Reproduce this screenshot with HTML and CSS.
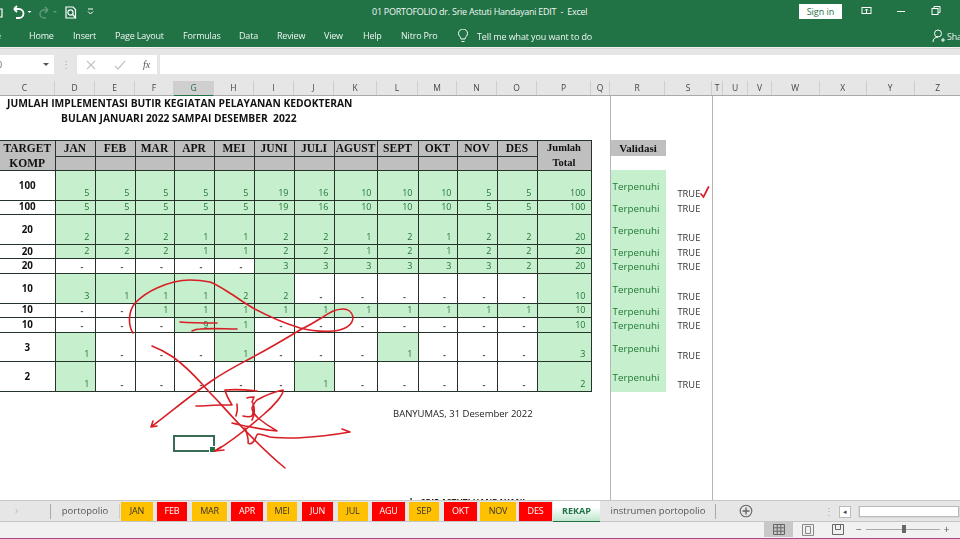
FILE: index.html
```html
<!DOCTYPE html>
<html lang="en">
<head>
<meta charset="utf-8">
<title>01 PORTOFOLIO dr. Srie Astuti Handayani EDIT - Excel</title>
<link rel="stylesheet" href="styles.css">
</head>
<body>
<div class="app">
  <header class="ribbon">
    <div class="titlebar">
      <div class="qat">
        <svg width="100" height="20" viewBox="0 0 100 20" fill="none" stroke="#fff" stroke-width="1.5">
          <path d="M0 6h2v8h-2" stroke-width="1.2"/>
          <path d="M14 6h5a4.500 4.500 0 0 1 0 9h-3M14 6l3-3M14 6l3 3" stroke-width="1.800"/>
          <path d="M27.500 8h4l-2 2z" fill="#fff" stroke="none"/>
          <path d="M48 7h-4a4 4 0 0 0 0 8h2M48 7l-3-3M48 7l-3 3" stroke="#5f9c7b"/>
          <path d="M53 8h4l-2 2z" fill="#5f9c7b" stroke="none"/>
          <path d="M66 4h7l2.500 2.500V15H66z" stroke-width="1.200"/>
          <circle cx="70.500" cy="9.500" r="2.600" stroke-width="1.100"/>
          <path d="M72.500 11.500l3.500 3.500" stroke-width="1.300"/>
          <path d="M88 6h5M88 8.500l2.500 2.500 2.500-2.500" stroke-width="1"/>
        </svg>
      </div>
      <div class="doc-title">01 PORTOFOLIO dr. Srie Astuti Handayani EDIT&nbsp; -&nbsp; Excel</div>
      <button class="signin">Sign in</button>
      <div class="win-icons">
        <svg width="12" height="10" viewBox="0 0 12 10" fill="none" stroke="#fff"><rect x="1" y="1.500" width="9" height="6"/><path d="M5.500 7V3M4 4.500l1.500-1.500 1.500 1.500"/></svg>
        <svg width="12" height="10" viewBox="0 0 12 10" fill="none" stroke="#fff"><path d="M1 5.500h8"/></svg>
        <svg width="12" height="10" viewBox="0 0 12 10" fill="none" stroke="#fff"><rect x="1" y="2.500" width="6" height="6"/><path d="M3 2.500V.5h6v6H7"/></svg>
      </div>
    </div>
    <nav class="menu">
      <span class="menu-edge">e</span>
      <span>Home</span><span>Insert</span><span>Page Layout</span><span>Formulas</span><span>Data</span><span>Review</span><span>View</span><span>Help</span><span>Nitro Pro</span>
      <span class="tell">
        <svg width="12" height="14" viewBox="0 0 12 14" fill="none" stroke="#fff"><path d="M4 10c0-2-2.500-3-2.500-5.500a4.500 4.500 0 0 1 9 0C10.500 7 8 8 8 10zM4.500 12.500h3"/></svg>
        Tell me what you want to do
      </span>
      <span class="share">
        <svg width="13" height="14" viewBox="0 0 13 14" fill="none" stroke="#fff"><circle cx="6" cy="4.500" r="3.500"/><path d="M1 13c0-3 2-5 5-5M9 11h4M11 9v4"/></svg>
        Sha
      </span>
    </nav>
  </header>

  <div class="formula-bar">
    <div class="name-box"><span>0</span><i class="caret"></i></div>
    <div class="dots">⋮</div>
    <div class="fx-box">
      <svg width="12" height="12" viewBox="0 0 12 12" fill="none" stroke="#c4c4c4" stroke-width="1.200"><path d="M2 2l8 8M10 2l-8 8"/></svg>
      <svg width="13" height="12" viewBox="0 0 13 12" fill="none" stroke="#c4c4c4" stroke-width="1.200"><path d="M2 7l3 3 7-8"/></svg>
      <em>fx</em>
    </div>
    <div class="formula-input"></div>
  </div>

  <div class="col-heads">
    <span class="w-c">C</span><span class="w-m">D</span><span class="w-m">E</span><span class="w-n">F</span><span class="w-m sel">G</span><span class="w-m">H</span><span class="w-m">I</span><span class="w-m">J</span><span class="w-k">K</span><span class="w-l">L</span><span class="w-n">M</span><span class="w-m">N</span><span class="w-m">O</span><span class="w-p">P</span><span class="w-q">Q</span><span class="w-r">R</span><span class="w-s">S</span><span class="w-t">T</span><span class="w-u">U</span><span class="w-v">V</span><span class="w-x">W</span><span class="w-x">X</span><span class="w-x">Y</span><span class="w-x">Z</span>
  </div>

  <main class="sheet">
    <h1 class="t1">JUMLAH IMPLEMENTASI BUTIR KEGIATAN PELAYANAN KEDOKTERAN</h1>
    <h2 class="t2">BULAN JANUARI 2022 SAMPAI DESEMBER&nbsp; 2022</h2>
    <div class="tables">
      <table class="rekap">
        <colgroup><col class="c-c"><col class="c-m"><col class="c-m"><col class="c-n"><col class="c-m"><col class="c-m"><col class="c-m"><col class="c-m"><col class="c-k"><col class="c-l"><col class="c-n"><col class="c-m"><col class="c-m"><col class="c-p"></colgroup>
        <thead>
          <tr class="h1r"><th rowspan="2">TARGET<br>KOMP</th><th>JAN</th><th>FEB</th><th>MAR</th><th>APR</th><th>MEI</th><th>JUNI</th><th>JULI</th><th>AGUST</th><th>SEPT</th><th>OKT</th><th>NOV</th><th>DES</th><th rowspan="2" class="tot">Jumlah<br>Total</th></tr>
          <tr class="h2r"><th></th><th></th><th></th><th></th><th></th><th></th><th></th><th></th><th></th><th></th><th></th><th></th></tr>
        </thead>
        <tbody>
          <tr class="tall"><th>100</th><td class="g">5</td><td class="g">5</td><td class="g">5</td><td class="g">5</td><td class="g">5</td><td class="g">19</td><td class="g">16</td><td class="g">10</td><td class="g">10</td><td class="g">10</td><td class="g">5</td><td class="g">5</td><td class="g">100</td></tr>
          <tr class="thin"><th>100</th><td class="g">5</td><td class="g">5</td><td class="g">5</td><td class="g">5</td><td class="g">5</td><td class="g">19</td><td class="g">16</td><td class="g">10</td><td class="g">10</td><td class="g">10</td><td class="g">5</td><td class="g">5</td><td class="g">100</td></tr>
          <tr class="tall"><th>20</th><td class="g">2</td><td class="g">2</td><td class="g">2</td><td class="g">1</td><td class="g">1</td><td class="g">2</td><td class="g">2</td><td class="g">1</td><td class="g">2</td><td class="g">1</td><td class="g">2</td><td class="g">2</td><td class="g">20</td></tr>
          <tr class="thin"><th>20</th><td class="g">2</td><td class="g">2</td><td class="g">2</td><td class="g">1</td><td class="g">1</td><td class="g">2</td><td class="g">2</td><td class="g">1</td><td class="g">2</td><td class="g">1</td><td class="g">2</td><td class="g">2</td><td class="g">20</td></tr>
          <tr class="thin"><th>20</th><td class="d">-</td><td class="d">-</td><td class="d">-</td><td class="d">-</td><td class="d">-</td><td class="g">3</td><td class="g">3</td><td class="g">3</td><td class="g">3</td><td class="g">3</td><td class="g">3</td><td class="g">2</td><td class="g">20</td></tr>
          <tr class="tall"><th>10</th><td class="g">3</td><td class="g">1</td><td class="g">1</td><td class="g">1</td><td class="g">2</td><td class="g">2</td><td class="d">-</td><td class="d">-</td><td class="d">-</td><td class="d">-</td><td class="d">-</td><td class="d">-</td><td class="g">10</td></tr>
          <tr class="thin"><th>10</th><td class="d">-</td><td class="d">-</td><td class="g">1</td><td class="g">1</td><td class="g">1</td><td class="g">1</td><td class="g">1</td><td class="g">1</td><td class="g">1</td><td class="g">1</td><td class="g">1</td><td class="g">1</td><td class="g">10</td></tr>
          <tr class="thin"><th>10</th><td class="d">-</td><td class="d">-</td><td class="d">-</td><td class="g">9</td><td class="g">1</td><td class="d">-</td><td class="d">-</td><td class="d">-</td><td class="d">-</td><td class="d">-</td><td class="d">-</td><td class="d">-</td><td class="g">10</td></tr>
          <tr class="tall"><th>3</th><td class="g">1</td><td class="d">-</td><td class="d">-</td><td class="d">-</td><td class="g">1</td><td class="d">-</td><td class="d">-</td><td class="d">-</td><td class="g">1</td><td class="d">-</td><td class="d">-</td><td class="d">-</td><td class="g">3</td></tr>
          <tr class="tall"><th>2</th><td class="g">1</td><td class="d">-</td><td class="d">-</td><td class="d">-</td><td class="d">-</td><td class="d">-</td><td class="g">1</td><td class="d">-</td><td class="d">-</td><td class="d">-</td><td class="d">-</td><td class="d">-</td><td class="g">2</td></tr>
        </tbody>
      </table>

      <div class="side">
        <div class="v-head"><span class="v-title">Validasi</span></div>
        <div class="v-row tall"><span class="v-ok">Terpenuhi</span><span class="v-true">TRUE</span></div>
        <div class="v-row thin"><span class="v-ok">Terpenuhi</span><span class="v-true">TRUE</span></div>
        <div class="v-row tall"><span class="v-ok">Terpenuhi</span><span class="v-true">TRUE</span></div>
        <div class="v-row thin"><span class="v-ok">Terpenuhi</span><span class="v-true">TRUE</span></div>
        <div class="v-row thin"><span class="v-ok">Terpenuhi</span><span class="v-true">TRUE</span></div>
        <div class="v-row tall"><span class="v-ok">Terpenuhi</span><span class="v-true">TRUE</span></div>
        <div class="v-row thin"><span class="v-ok">Terpenuhi</span><span class="v-true">TRUE</span></div>
        <div class="v-row thin"><span class="v-ok">Terpenuhi</span><span class="v-true">TRUE</span></div>
        <div class="v-row tall"><span class="v-ok">Terpenuhi</span><span class="v-true">TRUE</span></div>
        <div class="v-row tall"><span class="v-ok">Terpenuhi</span><span class="v-true">TRUE</span></div>
      </div>
    </div>
    <p class="place">BANYUMAS, 31 Desember 2022</p>
    <p class="signer">dr. SRIE ASTUTI HANDAYANI</p>

    <i class="freeze f1"></i>
    <i class="freeze f2"></i>
    <i class="active-cell"></i>
    <svg class="ink" width="960" height="404" viewBox="0 96 960 404" fill="none" stroke="#d81f26" stroke-width="1.600" stroke-linecap="round" stroke-linejoin="round">
      <path d="M133 333C128 325 128 312 135 303C142 296 148 292 157 288C168 283 180 280 190 280C198 280 205 281 210 282C220 286 226 291 233 295C240 300 246 304 253 308C268 316 284 323 300 328C312 331 322 332 333 331C345 330 353 325 353 317C352 312 348 309 343 309C335 309 329 313 323 317C315 322 308 326 300 330C285 339 268 349 253 357C240 364 226 371 213 380C192 394 171 412 151 427L153 421M151 427L157 426"/>
      <path d="M180 322C192 323 205 323 217 323"/>
      <path d="M192 331C196 329 198 329 200 329C212 328 225 329 237 329"/>
      <path d="M152 346C160 349 167 353 173 357C184 365 194 375 203 385C208 391 213 396 217 400C235 420 260 448 285 468"/>
      <path d="M196 406C205 406 214 405 222 405C226 405 229 405 232 405C229 400 226 395 225 390C236 389 248 390 257 391"/>
      <path d="M237 404C238 409 237 413 236 416"/>
      <path d="M247 398C249 397 252 397 254 397L252 402M243 416C247 417 250 417 252 416C254 412 254 407 253 403C255 410 255 415 252 420"/>
      <path d="M232 423C236 424 241 425 245 426C256 428 266 430 277 431C270 427 264 423 258 418C254 414 252 411 252 408C253 404 255 402 257 400C264 396 274 392 283 390C284 394 274 406 263 415C248 428 232 441 215 451"/>
      <path d="M215 451L221 447M215 451L224 450"/>
      <path d="M245 428C247 434 249 439 248 443C250 445 254 443 256 437C257 435 257 434 258 434C262 434 266 436 270 437C278 438 287 438 297 438C315 437 333 435 350 432L342 429"/>
    </svg>
    <svg class="check" width="12" height="14" viewBox="0 0 12 14" fill="none" stroke="#d81f26" stroke-width="1.700" stroke-linecap="round"><path d="M2 8l2.500 3 5-10"/></svg>
  </main>

  <footer class="bottom">
    <div class="tabs">
      <span class="nav-arrow">›</span>
      <span class="tab plain first">portopolio</span>
      <span class="tab y">JAN</span><span class="tab r">FEB</span><span class="tab y">MAR</span><span class="tab r">APR</span><span class="tab y">MEI</span><span class="tab r">JUN</span><span class="tab y">JUL</span><span class="tab r">AGU</span><span class="tab y">SEP</span><span class="tab r">OKT</span><span class="tab y">NOV</span><span class="tab r">DES</span>
      <span class="tab active">REKAP</span>
      <span class="tab plain last">instrumen portopolio</span>
      <svg class="add" width="14" height="14" viewBox="0 0 14 14" fill="none" stroke="#666" stroke-width="1.100"><circle cx="7" cy="7" r="5.800"/><path d="M3.500 7h7M7 3.500v7" stroke-width="1.400"/></svg>
      <span class="vdots">⋮</span>
      <span class="scroll-left">◂</span>
      <span class="scroll-track"><i></i></span>
    </div>
    <div class="status">
      <span class="view on"><svg width="12" height="11" viewBox="0 0 12 11" fill="none" stroke="#666"><path d="M.5.500h11v10H.5zM.5 3.800h11M.5 7.200h11M4.200.5v10M7.800.5v10"/></svg></span>
      <span class="view"><svg width="12" height="12" viewBox="0 0 12 12" fill="none" stroke="#888"><path d="M.5.500h11v11H.5zM3.500 2.500h5v7h-5z"/></svg></span>
      <span class="view"><svg width="12" height="11" viewBox="0 0 12 11" fill="none" stroke="#666"><path d="M.5.500h11v10H.5zM3.500.5v5h5v-5"/></svg></span>
      <div class="zoom"><b>−</b><span class="slider"><i></i></span><b>+</b></div>
    </div>
    <div class="taskline"></div>
  </footer>
</div>
</body>
</html>
```

FILE: styles.css
```css
* { box-sizing: border-box; }
html, body { margin: 0; padding: 0; }
body { width: 960px; height: 539px; overflow: hidden; background: #fff; font-family: "Open Sans", "Liberation Sans", sans-serif; }
.app { width: 960px; height: 539px; display: flex; flex-direction: column; overflow: hidden; filter: blur(.4px); }

/* ribbon */
.ribbon { height: 47px; background: #217346; color: #fff; flex: none; }
.titlebar { height: 24px; display: flex; align-items: center; position: relative; }
.qat { width: 100px; display: flex; height: 20px; margin-top: 2px; }
.doc-title { position: absolute; left: 372px; top: 5px; font-size: 9px; letter-spacing: -.26px; line-height: 13px; white-space: nowrap; color: #f1f6f3; }
.signin { position: absolute; left: 799px; top: 4px; width: 43px; height: 15px; border: 0; padding: 0; background: #fff; color: #217346; font: 9px/15px "Open Sans", sans-serif; }
.win-icons { position: absolute; left: 861px; top: 6px; display: flex; gap: 23px; }
.menu { height: 23px; display: flex; align-items: center; font-size: 9px; letter-spacing: -.2px; position: relative; color: #eef5f1; }
.menu > span { position: absolute; top: 5px; line-height: 13px; white-space: nowrap; }
.menu-edge { left: -4px; }
.menu > span:nth-child(2) { left: 29px; }
.menu > span:nth-child(3) { left: 73px; }
.menu > span:nth-child(4) { left: 115px; }
.menu > span:nth-child(5) { left: 183px; }
.menu > span:nth-child(6) { left: 239px; }
.menu > span:nth-child(7) { left: 277px; }
.menu > span:nth-child(8) { left: 324px; }
.menu > span:nth-child(9) { left: 363px; }
.menu > span:nth-child(10) { left: 401px; }
.menu > span.tell { left: 457px; display: flex; gap: 8px; align-items: center; letter-spacing: -.12px; }
.menu > span.share { left: 932px; display: flex; gap: 2px; align-items: center; }

/* formula bar */
.formula-bar { height: 34px; flex: none; background: #e6e6e6; border-top: 1px solid #f2f2f2; display: flex; padding: 7px 0 0; box-shadow: inset 0 1px 0 #d8d8d8; }
.name-box { width: 54px; height: 19px; background: #fff; display: flex; justify-content: space-between; align-items: center; padding: 0 5px 0 0; font-size: 9px; color: #666; }
.name-box span { margin-left: -3px; }
.caret { width: 0; height: 0; border: 3px solid transparent; border-top: 3px solid #555; border-bottom: 0; }
.dots { width: 23px; text-align: center; color: #aaa; font-size: 10px; line-height: 19px; }
.fx-box { width: 80px; height: 19px; background: #fff; display: flex; align-items: center; padding-left: 8px; gap: 16px; }
.fx-box em { font: italic 10px/19px "Liberation Serif", serif; color: #555; margin-left: 1px; }
.formula-input { margin-left: 3px; flex: 1; height: 19px; background: #fff; }

/* column headers */
.col-heads { height: 15px; flex: none; display: flex; background: #e6e6e6; border-bottom: 1px solid #a9a9a9; font-size: 8.500px; line-height: 14px; color: #444; }
.col-heads span { text-align: center; border-right: 1px solid #cfcfcf; flex: none; }
.col-heads .sel { background: #cfcfcf; border-bottom: 1px solid #217346; height: 15px; color: #217346; }
.col-heads .w-c { padding-right: 5px; }
.w-c { width: 55px; } .w-m { width: 40px; } .w-n { width: 39px; } .w-k { width: 43px; } .w-l { width: 41px; } .w-p { width: 54px; } .w-q { width: 19px; } .w-r { width: 55px; } .w-s { width: 47px; } .w-t { width: 11px; } .w-u { width: 25px; } .w-v { width: 24px; } .w-x { width: 47.500px; }

/* sheet */
.sheet { height: 404px; flex: none; position: relative; background: #fff; overflow: hidden; }
.t1, .t2 { margin: 0; font: bold 10.250px/15px "Open Sans", sans-serif; color: #111; white-space: nowrap; }
.t1 { padding: 0 0 0 7px; }
.t2 { padding-left: 61px; }
.tables { margin-top: 14px; display: flex; align-items: flex-start; }
.rekap { border-collapse: collapse; table-layout: fixed; width: 591px; flex: none; }
.c-c { width: 55px; } .c-m { width: 40px; } .c-n { width: 39px; } .c-k { width: 43px; } .c-l { width: 41px; } .c-p { width: 54px; }
.rekap th, .rekap td { border: 1px solid #26332b; padding: 0; }
.rekap tr > :first-child { border-left: 0; }
.rekap thead th { background: #bfbfbf; font: bold 11.500px/14.500px "Liberation Serif", serif; color: #111; text-align: center; }
.rekap thead .tot { font-size: 10.500px; }
.h1r { height: 16px; } .h2r { height: 14px; }
.rekap tr.tall { height: 29.500px; } .rekap tr.thin { height: 14.700px; }
.rekap tbody th { background: #fff; font: bold 9.800px/12px "Open Sans", sans-serif; color: #111; text-align: center; }
.rekap tbody tr.tall th { vertical-align: middle; padding-top: 1px; }
.rekap td { font-size: 9px; line-height: 12px; text-align: right; vertical-align: bottom; padding: 0 5px 1px 0; color: #24763a; }
.rekap td.g { background: #c6efce; }
.rekap td.d { background: #fff; color: #555; text-align: center; padding: 0 0 0 14px; font-weight: 700; }

.side { margin-left: 19px; display: grid; grid-template-columns: 55px 47px; width: 102px; }
.v-head { grid-column: 1 / -1; height: 30px; }
.v-title { display: block; width: 55px; height: 16px; background: #bfbfbf; font: bold 11px/16px "Liberation Serif", serif; color: #111; text-align: center; }
.v-row { grid-column: 1 / -1; display: grid; grid-template-columns: 55px 47px; font-size: 9.800px; line-height: 14px; }
.v-row.tall { height: 29.500px; }
.v-row.thin { height: 14.700px; }
.v-ok { background: #c6efce; color: #1f7a33; padding: 2px 0 0 2px; }
.v-row.tall .v-ok { padding-top: 10px; }
.v-true { color: #333; padding: 2px 0 0 12px; font-size: 9.300px; }
.v-row.tall .v-true { padding-top: 17px; }

.place { margin: 15px 0 0 393px; font-size: 9.500px; line-height: 13px; color: #222; white-space: nowrap; }
.signer { position: absolute; left: 407px; top: 402px; height: 2px; overflow: hidden; margin: 0; font-size: 8.500px; font-weight: 700; line-height: 7px; color: #222; white-space: nowrap; }

.freeze { position: absolute; top: 0; bottom: 0; width: 1px; background: #b5b5b5; }
.f1 { left: 610px; } .f2 { left: 712px; }
.active-cell { position: absolute; left: 173px; top: 339px; width: 42px; height: 17px; border: 2px solid #3a6b54; }
.active-cell::after { content: ""; position: absolute; right: -3px; bottom: -3px; width: 5px; height: 5px; background: #217346; border: 1px solid #fff; }
.ink { position: absolute; left: 0; top: 0; }
.check { position: absolute; left: 699px; top: 90px; }

/* bottom */
.bottom { height: 39px; flex: none; background: #f1f1f1; position: relative; border-top: 1px solid #c8c8c8; }
.tabs { height: 21px; background: #e6e6e6; position: relative; border-bottom: 1px solid #c6c6c6; }
.nav-arrow { position: absolute; left: 15px; top: 2px; font-size: 10px; color: #bbb; line-height: 14px; }
.tab { position: absolute; top: 0; height: 20px; font-size: 9.500px; line-height: 20px; text-align: center; color: #333; }
.tab.y { background: #ffc000; height: 19px; top: 1px; line-height: 18px; font-size: 9px; letter-spacing: -.2px; }
.tab.r { background: #fe0000; height: 19px; top: 1px; line-height: 18px; font-size: 9px; letter-spacing: -.2px; color: #fff; }
.tab:nth-of-type(3) { left: 121px; width: 32px; }
.tab:nth-of-type(4) { left: 157px; width: 30px; }
.tab:nth-of-type(5) { left: 192px; width: 35px; }
.tab:nth-of-type(6) { left: 231px; width: 32px; }
.tab:nth-of-type(7) { left: 267px; width: 30px; }
.tab:nth-of-type(8) { left: 302px; width: 31px; }
.tab:nth-of-type(9) { left: 338px; width: 30px; }
.tab:nth-of-type(10) { left: 372px; width: 33px; }
.tab:nth-of-type(11) { left: 409px; width: 30px; }
.tab:nth-of-type(12) { left: 444px; width: 33px; }
.tab:nth-of-type(13) { left: 480px; width: 36px; }
.tab:nth-of-type(14) { left: 519px; width: 33px; }
.tab.first { left: 50px; width: 70px; border-left: 1px solid #aaa; color: #555; height: 15px; top: 3px; line-height: 14px; border-right: 1px solid #ccc; }
.tab.active { left: 553px; width: 47px; background: linear-gradient(#fff 30%, #bfe6cb); color: #217346; font-weight: 700; font-size: 9px; border-bottom: 1px solid #217346; height: 21px; }
.tab.last { left: 601px; width: 115px; color: #555; height: 15px; top: 3px; line-height: 14px; border-right: 1px solid #aaa; white-space: nowrap; }
.add { position: absolute; left: 739px; top: 3px; }
.vdots { position: absolute; left: 824px; top: 1px; color: #aaa; font-size: 10px; line-height: 18px; }
.scroll-left { position: absolute; left: 839px; top: 5px; width: 12px; height: 12px; background: #fff; border: 1px solid #bbb; font-size: 7px; line-height: 10px; text-align: center; color: #444; }
.scroll-track { position: absolute; left: 858px; top: 5px; right: 0; height: 12px; background: #d8d8d8; }
.scroll-track i { display: block; margin-left: 1px; width: 100px; height: 11px; background: #fff; border: 1px solid #bbb; }
.status { height: 15px; position: relative; }
.view { position: absolute; top: 0; width: 29px; height: 15px; display: flex; align-items: center; justify-content: center; }
.view.on { left: 764px; background: #c8c8c8; }
.view:nth-child(2) { left: 793px; }
.view:nth-child(3) { left: 823px; }
.zoom { position: absolute; left: 856px; top: 0; display: flex; align-items: center; height: 15px; gap: 4px; color: #555; font-size: 10px; }
.zoom b { font-weight: 400; line-height: 15px; }
.slider { display: block; width: 74px; height: 1px; background: #aaa; position: relative; }
.slider i { position: absolute; left: 36px; top: -4px; width: 4px; height: 8px; background: #666; }
.taskline { position: absolute; left: 0; right: 0; top: 37px; height: 2px; background: #a8488a; }
```
